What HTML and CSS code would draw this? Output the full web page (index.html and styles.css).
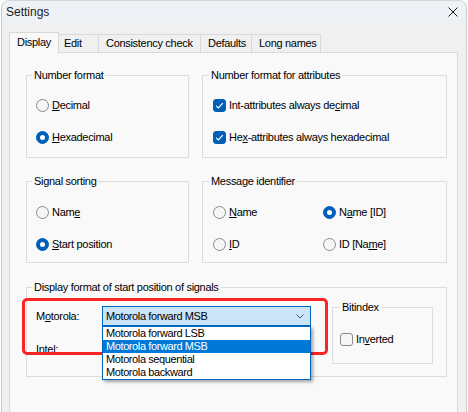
FILE: index.html
```html
<!DOCTYPE html>
<html>
<head>
<meta charset="utf-8">
<title>Settings</title>
<link rel="stylesheet" href="styles.css">
</head>
<body>
<div class="window">
  <div class="titlebar">
    <span class="title">Settings</span>
    <svg class="close" width="10" height="10" viewBox="0 0 10 10"><path d="M0.5 0.5 L9.5 9.5 M9.5 0.5 L0.5 9.5" stroke="#1b1b1b" stroke-width="1" fill="none"/></svg>
  </div>
  <div class="dialog">
    <div class="tabs">
      <div class="tab tab-display active">Display</div>
      <div class="tab tab-edit">Edit</div>
      <div class="tab tab-consistency">Consistency check</div>
      <div class="tab tab-defaults">Defaults</div>
      <div class="tab tab-long">Long names</div>
    </div>
    <div class="page">
      <div class="row">
        <fieldset class="group group-left">
          <legend>Number format</legend>
          <div class="options">
            <label class="opt"><span class="radio"></span><span><u>D</u>ecimal</span></label>
            <label class="opt"><span class="radio checked"></span><span><u>H</u>exadecimal</span></label>
          </div>
        </fieldset>
        <fieldset class="group group-right">
          <legend>Number format for attributes</legend>
          <div class="options">
            <label class="opt"><span class="check checked"><svg width="13" height="13" viewBox="0 0 13 13"><path d="M3.2 6.8 L5.4 9 L9.8 4.2" stroke="#fff" stroke-width="1.2" fill="none"/></svg></span><span>Int-attributes always de<u>c</u>imal</span></label>
            <label class="opt"><span class="check checked"><svg width="13" height="13" viewBox="0 0 13 13"><path d="M3.2 6.8 L5.4 9 L9.8 4.2" stroke="#fff" stroke-width="1.2" fill="none"/></svg></span><span>He<u>x</u>-attributes always hexadecimal</span></label>
          </div>
        </fieldset>
      </div>
      <div class="row row-second">
        <fieldset class="group group-left group-second">
          <legend>Signal sorting</legend>
          <div class="options">
            <label class="opt"><span class="radio"></span><span>Nam<u>e</u></span></label>
            <label class="opt"><span class="radio checked"></span><span><u>S</u>tart position</span></label>
          </div>
        </fieldset>
        <fieldset class="group group-right group-second">
          <legend>Message identifier</legend>
          <div class="options options-grid">
            <label class="opt"><span class="radio"></span><span><u>N</u>ame</span></label>
            <label class="opt"><span class="radio checked"></span><span>N<u>a</u>me [ID]</span></label>
            <label class="opt"><span class="radio"></span><span><u>I</u>D</span></label>
            <label class="opt"><span class="radio"></span><span>ID [Na<u>m</u>e]</span></label>
          </div>
        </fieldset>
      </div>
      <fieldset class="group group-format">
        <legend>Display format of start position of signals</legend>
        <div class="format-body">
          <div class="format-grid">
            <span class="field-label">M<u>o</u>torola:</span>
            <div class="combo">
              <div class="combo-box"><span>Motorola forward MSB</span><svg width="8" height="5" viewBox="0 0 8 5"><path d="M0.5 0.5 L4 4 L7.5 0.5" stroke="#5a5a5a" stroke-width="1" fill="none"/></svg></div>
              <ul class="dropdown">
                <li>Motorola forward LSB</li>
                <li class="selected">Motorola forward MSB</li>
                <li>Motorola sequential</li>
                <li>Motorola backward</li>
              </ul>
            </div>
            <span class="field-label">Intel:</span>
            <div class="combo">
              <div class="combo-box combo-plain"></div>
            </div>
          </div>
          <fieldset class="group group-bit">
            <legend>Bitindex</legend>
            <label class="opt"><span class="check"></span><span>In<u>v</u>erted</span></label>
          </fieldset>
        </div>
      </fieldset>
      <div class="highlight"></div>
    </div>
  </div>
</div>
</body>
</html>
```

FILE: styles.css
```css
html, body {
  margin: 0;
  padding: 0;
  background: #ffffff;
  overflow: hidden;
}

body {
  width: 468px;
  height: 412px;
  font-family: "Liberation Sans", Arial, sans-serif;
  font-size: 11px;
  letter-spacing: -0.3px;
  color: #000;
}

.window {
  margin-left: 1px;
  width: 466px;
  height: 430px;
  box-sizing: border-box;
  border-left: 1px solid #c9c9c9;
  border-right: 1px solid #c9c9c9;
  border-top: 1px solid #d6d6d6;
  border-top-right-radius: 8px;
  border-top-left-radius: 8px;
  background: #f0f0f0;
  overflow: hidden;
}

.titlebar {
  height: 22px;
  background: #eef2f7;
  display: flex;
  align-items: center;
  justify-content: space-between;
  padding-left: 4px;
  padding-right: 8px;
}

.title {
  font-size: 12px;
  letter-spacing: 0;
  color: #1b1b1b;
  line-height: 22px;
}

.close {
  display: block;
}

.dialog {
  padding: 9px 8px 0 7px;
}

.tabs {
  display: flex;
  align-items: flex-end;
  height: 20px;
}

.tab {
  box-sizing: border-box;
  height: 18px;
  line-height: 17px;
  border: 1px solid #d9d9d9;
  border-bottom: none;
  background: #f0f0f0;
  padding-left: 7px;
  margin-left: -1px;
  white-space: nowrap;
}

.tab.active {
  height: 21px;
  margin-bottom: -1px;
  margin-left: 0;
  background: #f9f9f9;
  position: relative;
  z-index: 1;
  line-height: 18px;
}

.tab-display { width: 50px; }
.tab-edit { width: 41px; padding-left: 5px; }
.tab-consistency { width: 103px; }
.tab-defaults { width: 52px; }
.tab-long { width: 70px; }

.page {
  position: relative;
  border: 1px solid #d9d9d9;
  background: #f9f9f9;
  padding: 16px 10px 0 16px;
  height: 400px;
}

.row {
  display: grid;
  grid-template-columns: 163px 245px;
  column-gap: 13px;
}

.row-second {
  margin-top: 17px;
}

.group {
  margin: 0;
  min-width: 0;
  border: 1px solid #dcdcdc;
  padding: 15px 8px 12px 9px;
  box-sizing: border-box;
}

.group legend {
  padding: 0 2px;
  margin-left: -4px;
  line-height: 13px;
}

.group-right {
  padding-left: 10px;
}

.group-second {
  padding-top: 16px;
  padding-bottom: 10px;
}

.options {
  display: grid;
  row-gap: 16px;
}

.options-grid {
  grid-template-columns: 110px auto;
}

.opt {
  display: flex;
  align-items: center;
  height: 16px;
  line-height: 16px;
  white-space: nowrap;
}

.radio {
  box-sizing: border-box;
  width: 13px;
  height: 13px;
  border-radius: 50%;
  border: 1px solid #8a8a8a;
  background: #f6f6f6;
  margin-right: 3px;
  flex: none;
  display: flex;
  align-items: center;
  justify-content: center;
}

.radio.checked {
  border-color: #005fb8;
  background: #005fb8;
}

.radio.checked::after {
  content: "";
  width: 5px;
  height: 5px;
  border-radius: 50%;
  background: #fff;
}

.check {
  box-sizing: border-box;
  width: 13px;
  height: 13px;
  border-radius: 3px;
  border: 1px solid #8a8a8a;
  background: #f6f6f6;
  margin-right: 3px;
  flex: none;
  display: flex;
}

.check svg {
  display: block;
  margin: -1px;
}

.check.checked {
  border-color: #005fb8;
  background: #005fb8;
}

.group-format {
  margin-top: 18px;
  width: 421px;
  padding: 7px 12px 12px 9px;
}

.format-body {
  display: flex;
  align-items: flex-start;
}

.format-grid {
  display: grid;
  grid-template-columns: 66px 209px;
  row-gap: 13px;
  margin-top: 5px;
  align-items: center;
}

.field-label {
  line-height: 16px;
}

.combo {
  position: relative;
}

.combo-box {
  box-sizing: border-box;
  height: 20px;
  border: 1px solid #0067c0;
  background: #cce4f7;
  display: flex;
  align-items: center;
  justify-content: space-between;
  padding: 0 6px 0 3px;
  letter-spacing: -0.4px;
}

.combo-box svg {
  display: block;
}

.combo-plain {
  background: #fff;
  border-color: #b5b5b5;
}

.dropdown {
  position: absolute;
  top: 100%;
  left: 0;
  width: 209px;
  box-sizing: border-box;
  margin: 0;
  padding: 0;
  list-style: none;
  border: 1px solid #0067c0;
  background: #fff;
  box-shadow: 2px 2px 3px rgba(0, 0, 0, 0.35);
  z-index: 3;
  letter-spacing: -0.4px;
}

.dropdown li {
  height: 13px;
  line-height: 13px;
  padding-left: 3px;
  white-space: nowrap;
}

.dropdown li.selected {
  background: #0078d7;
  color: #fff;
}

.group-bit {
  margin-left: 21px;
  width: 101px;
  padding: 17px 6px 16px 7px;
}

.group-bit legend {
  margin-left: 0;
}

.highlight {
  position: absolute;
  left: 12px;
  top: 245px;
  width: 306px;
  height: 57px;
  box-sizing: border-box;
  border: 3px solid #fb2424;
  border-radius: 5px;
  z-index: 2;
}
```
